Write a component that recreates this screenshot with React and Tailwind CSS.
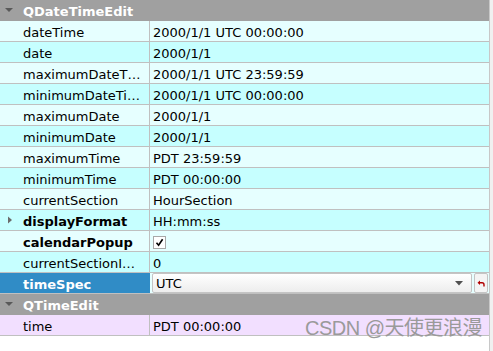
import React from 'react';

// property editor rows for the QDateTimeEdit group
const rows = [
  { name: 'dateTime', value: '2000/1/1 UTC 00:00:00' },
  { name: 'date', value: '2000/1/1' },
  { name: 'maximumDateT…', value: '2000/1/1 UTC 23:59:59' },
  { name: 'minimumDateTi…', value: '2000/1/1 UTC 00:00:00' },
  { name: 'maximumDate', value: '2000/1/1' },
  { name: 'minimumDate', value: '2000/1/1' },
  { name: 'maximumTime', value: 'PDT 23:59:59' },
  { name: 'minimumTime', value: 'PDT 00:00:00' },
  { name: 'currentSection', value: 'HourSection' },
  { name: 'displayFormat', value: 'HH:mm:ss', bold: true, expand: true },
  { name: 'calendarPopup', check: true, bold: true },
  { name: 'currentSectionI…', value: '0' },
];

const GroupHeader = ({ title }) => (
  <div className="h-[21px] flex items-center bg-[#a0a0a0] border-b border-[#a0a0a0]">
    <span className="w-[23px] flex pl-[5px]">
      <svg width="8" height="8" viewBox="0 0 8 8">
        <path d="M0 2 L8 2 L4 6 Z" fill="#595959" />
      </svg>
    </span>
    <span className="font-bold text-white pt-[3px]">{title}</span>
  </div>
);

const Row = ({ row, shade }) => (
  <div className={`h-[21px] flex border-b border-[#c0c0c0] ${shade}`}>
    <div className="w-[150px] shrink-0 flex items-center border-r border-[#c0c0c0] overflow-hidden">
      <span className="w-[23px] shrink-0 flex pl-[7px]">
        {row.expand && (
          <svg width="6" height="8" viewBox="0 0 6 8">
            <path d="M1 0.5 L5 4 L1 7.5 Z" fill="#6b6b6b" />
          </svg>
        )}
      </span>
      <span className={`whitespace-nowrap pt-[3px] ${row.bold ? 'font-bold' : ''}`}>{row.name}</span>
    </div>
    <div className="flex-1 flex items-center pl-[3px] whitespace-nowrap">
      {row.check ? (
        <span className="w-[13px] h-[13px] bg-white border border-[#a8a8a8] flex items-center justify-center mt-[2px]">
          <svg width="9" height="9" viewBox="0 0 9 9">
            <path d="M1.5 4.8 L3.6 7.2 L7.6 1.2" stroke="#000" strokeWidth="1.6" fill="none" />
          </svg>
        </span>
      ) : (
        <span className="pt-[3px]">{row.value}</span>
      )}
    </div>
  </div>
);

export default function App() {
  return (
    <div
      className="w-[493px] h-[351px] bg-white flex text-[13px] text-black overflow-hidden relative"
      style={{ fontFamily: '"DejaVu Sans", "Noto Sans CJK SC", sans-serif' }}
    >
      <div className="w-[489px] flex flex-col">
        <GroupHeader title="QDateTimeEdit" />
        {rows.map((row, i) => (
          <Row key={row.name} row={row} shade={i % 2 === 0 ? 'bg-[#e6ffff]' : 'bg-[#c6ffff]'} />
        ))}
        {/* timeSpec, selected, with combo editor */}
        <div className="h-[21px] flex border-b border-[#c0c0c0] bg-[#e6ffff]">
          <div className="w-[150px] shrink-0 flex items-center bg-[#308cc6] text-white font-bold pl-[23px]">
            <span className="pt-[3px]">timeSpec</span>
          </div>
          <div className="flex-1 flex items-center gap-[2px] pl-[2px] pr-[1px]">
            <div className="flex-1 h-[20px] flex items-center justify-between rounded-[2px] border border-[#c4c4c4] bg-gradient-to-b from-white to-[#ededed] pl-[3px] pr-[8px]">
              <span className="pt-[2px]">UTC</span>
              <svg width="8" height="5" viewBox="0 0 8 5">
                <path d="M0 0 L8 0 L4 4.5 Z" fill="#505050" />
              </svg>
            </div>
            <div className="w-[14px] h-[20px] rounded-[2px] border border-[#c4c4c4] bg-[#f4f4f4] flex items-center justify-center">
              <svg width="8" height="7" viewBox="0 0 8 7">
                <path d="M3 0.5 L0.5 2.8 L3 5 Z" fill="#b00000" />
                <path d="M2.5 2.8 H5 Q7 2.8 7 4.8 V6.5" stroke="#b00000" strokeWidth="1.4" fill="none" />
              </svg>
            </div>
          </div>
        </div>
        <GroupHeader title="QTimeEdit" />
        <Row row={{ name: 'time', value: 'PDT 00:00:00' }} shade="bg-[#f2dfff]" />
      </div>
      <div className="w-[4px] border-l border-[#c8c8c8] bg-[#f0f0f0]" />
      <span
        className="absolute left-[305px] top-[313px] text-[20px] text-[#9a9a9a] tracking-tight"
        style={{ fontFamily: '"Liberation Sans", "Noto Sans CJK SC", sans-serif' }}
      >
        CSDN @天使更浪漫
      </span>
    </div>
  );
}
